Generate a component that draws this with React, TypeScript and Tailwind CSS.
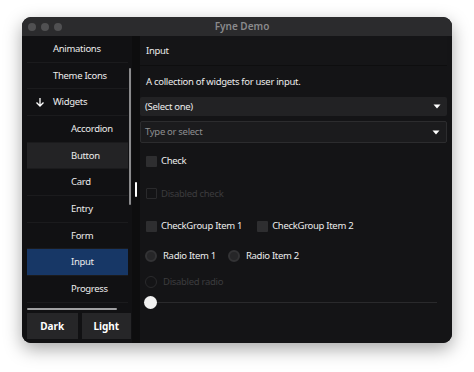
import React from 'react'

const font = { fontFamily: '"Noto Sans", "Open Sans", sans-serif' }

function Caret() {
  return (
    <svg width="8" height="5" viewBox="0 0 8 5" className="shrink-0">
      <path d="M0.5 0.5 H7.5 L4 4.5 Z" fill="#ffffff" />
    </svg>
  )
}

function Box({ disabled }: { disabled?: boolean }) {
  return (
    <span
      className={
        disabled
          ? 'block w-[11px] h-[11px] border border-[#2a2a2c] rounded-[1px] shrink-0'
          : 'block w-[11px] h-[11px] bg-[#2e2e30] rounded-[1px] shrink-0'
      }
    />
  )
}

function Radio({ disabled }: { disabled?: boolean }) {
  return (
    <span
      className={
        disabled
          ? 'block w-[12px] h-[12px] rounded-full border border-[#2a2a2c] shrink-0'
          : 'block w-[12px] h-[12px] rounded-full border-[2px] border-[#333335] bg-[#262628] shrink-0'
      }
    />
  )
}

const items = [
  { label: 'Animations', indent: 0 },
  { label: 'Theme Icons', indent: 0 },
  { label: 'Widgets', indent: 0, open: true },
  { label: 'Accordion', indent: 1 },
  { label: 'Button', indent: 1, hover: true },
  { label: 'Card', indent: 1 },
  { label: 'Entry', indent: 1 },
  { label: 'Form', indent: 1 },
  { label: 'Input', indent: 1, selected: true },
  { label: 'Progress', indent: 1 },
]

export default function App() {
  return (
    <div className="w-[474px] h-[372px] bg-white pt-[17px] pl-[22px]" style={font}>
      <div className="w-[430px] h-[326px] rounded-[9px] overflow-hidden bg-[#141416] shadow-[0_6px_18px_rgba(0,0,0,0.35)] flex flex-col">
        {/* title bar */}
        <div className="h-[19px] bg-[#2b2b2d] flex items-center shrink-0">
          <div className="flex gap-[5px] pl-[6px]">
            <span className="w-[8px] h-[8px] rounded-full bg-[#505052]" />
            <span className="w-[8px] h-[8px] rounded-full bg-[#505052]" />
            <span className="w-[8px] h-[8px] rounded-full bg-[#505052]" />
          </div>
          <div className="flex-1 text-center text-[10px] font-semibold text-[#8a8a8c] pr-[30px]">Fyne Demo</div>
        </div>

        <div className="flex flex-1 min-h-0 text-[9.5px] tracking-[-0.3px] leading-none">
          {/* sidebar */}
          <div className="w-[110px] flex flex-col pl-[5px] bg-[#111113]">
            <div className="flex flex-1 min-h-0">
              <div className="flex-1 flex flex-col overflow-hidden">
                {items.map((it) => (
                  <div
                    key={it.label}
                    className={
                      'h-[26.67px] shrink-0 flex items-center border-b border-[#1b1b1d] ' +
                      (it.selected ? 'bg-[#173766] ' : it.hover ? 'bg-[#232325] ' : '') +
                      'text-[#ececec]'
                    }
                  >
                    {it.indent === 0 ? (
                      <>
                        <span className="w-[26px] flex justify-center">
                          {it.open && (
                            <svg width="10" height="10" viewBox="0 0 10 10">
                              <path d="M5 1 V9 M1.5 5.5 L5 9 L8.5 5.5" stroke="#ffffff" strokeWidth="1.3" fill="none" />
                            </svg>
                          )}
                        </span>
                        <span>{it.label}</span>
                      </>
                    ) : (
                      <span className="pl-[44px]">{it.label}</span>
                    )}
                  </div>
                ))}
              </div>
              <div className="w-[4px] flex justify-center pt-[32px]">
                <span className="w-[2px] h-[137px] bg-[#8a8a8c] rounded-full" />
              </div>
            </div>
            <div className="h-[2px] w-[90px] bg-[#a0a0a2] rounded-full mb-[3px]" />
            <div className="flex gap-[4px] pb-[4px] pr-[1px]">
              <div className="w-[51px] h-[26px] bg-[#262628] flex items-center justify-center text-[10px] tracking-normal font-bold text-white">Dark</div>
              <div className="w-[50px] h-[26px] bg-[#262628] flex items-center justify-center text-[10px] tracking-normal font-bold text-white">Light</div>
            </div>
          </div>

          {/* split divider */}
          <div className="w-[8px] bg-[#0d0d0e] flex justify-center items-start pt-[146px]">
            <span className="w-[2px] h-[15px] bg-white rounded-full" />
          </div>

          {/* main */}
          <div className="flex-1 flex flex-col bg-[#141416] pr-[5px]">
            <div className="h-[30px] shrink-0 flex items-center pl-[6px] text-[#ececec] border-b border-[#0e0e0f] bg-[#151517]">Input</div>
            <div className="h-[31px] shrink-0 flex items-center pl-[6px] text-[#ececec]">A collection of widgets for user input.</div>
            <div className="h-[19px] shrink-0 bg-[#222224] rounded-[2px] flex items-center justify-between pl-[5px] pr-[6px] text-[#ececec]">
              <span>(Select one)</span>
              <Caret />
            </div>
            <div className="h-[22px] shrink-0 mt-[5px] bg-[#1b1b1d] border border-[#2c2c2e] rounded-[2px] flex items-center justify-between pl-[4px] pr-[6px] text-[#8e8e90]">
              <span>Type or select</span>
              <Caret />
            </div>
            <div className="h-[34px] shrink-0 mt-[1px] flex items-center gap-[4px] pl-[6px] text-[#ececec]">
              <Box />
              <span>Check</span>
            </div>
            <div className="h-[31px] shrink-0 flex items-center gap-[4px] pl-[6px] text-[#3c3c3e]">
              <Box disabled />
              <span>Disabled check</span>
            </div>
            <div className="h-[34px] shrink-0 flex items-center pl-[6px] text-[#ececec]">
              <Box />
              <span className="ml-[4px]">CheckGroup Item 1</span>
              <span className="ml-[15px] flex"><Box /></span>
              <span className="ml-[4px]">CheckGroup Item 2</span>
            </div>
            <div className="h-[25px] shrink-0 flex items-center pl-[5px] text-[#ececec]">
              <Radio />
              <span className="ml-[6px]">Radio Item 1</span>
              <span className="ml-[12px] flex"><Radio /></span>
              <span className="ml-[6px]">Radio Item 2</span>
            </div>
            <div className="h-[27px] shrink-0 flex items-center pl-[5px] text-[#3c3c3e]">
              <Radio disabled />
              <span className="ml-[6px]">Disabled radio</span>
            </div>
            <div className="h-[14px] shrink-0 flex items-center pl-[4px] pr-[10px]">
              <span className="w-[13px] h-[13px] rounded-full bg-[#f2f2f2] shrink-0" />
              <span className="flex-1 h-[1px] bg-[#2a2a2c]" />
            </div>
          </div>
        </div>
      </div>
    </div>
  )
}
